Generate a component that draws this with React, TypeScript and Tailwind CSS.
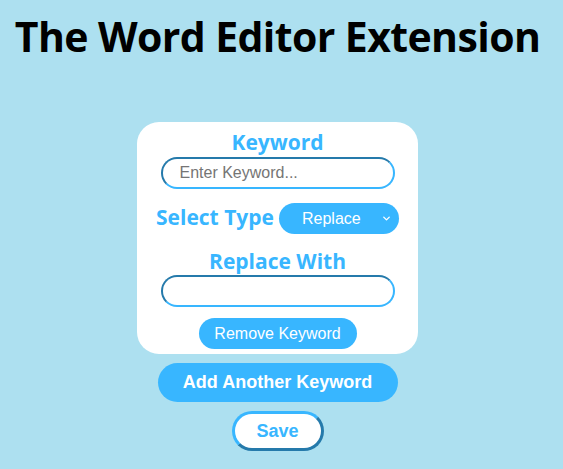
import { ChevronDown } from "lucide-react";

const App = () => {
  return (
    <div className="min-h-screen bg-[#ade0f0] flex flex-col items-center pt-[10px] pr-[8px] font-['Liberation_Sans',Arial,sans-serif]">
      {/* Title */}
      <h1 className="text-[41px] leading-[53px] font-bold text-black font-['Open_Sans','Noto_Sans',sans-serif] tracking-[-0.6px]">
        The Word Editor Extension
      </h1>

      {/* Keyword card */}
      <div className="mt-[59px] w-[281px] bg-white rounded-[22px] flex flex-col items-center pt-[6px] pb-[5px]">
        <label className="text-[21px] leading-[28px] font-bold text-[#38b6ff] font-['Open_Sans','Noto_Sans',sans-serif]">
          Keyword
        </label>
        <input
          type="text"
          placeholder="Enter Keyword..."
          className="mt-[1px] w-[234px] h-[32px] rounded-full border-2 [border-style:inset] border-[#38b6ff] px-[17px] text-[16px] text-black placeholder:text-[#757575] outline-none"
        />

        <div className="mt-[14px] flex items-center gap-[5px]">
          <span className="text-[21px] leading-[28px] font-bold text-[#38b6ff] font-['Open_Sans','Noto_Sans',sans-serif] pb-[3px]">
            Select Type
          </span>
          <div className="relative">
            <select className="appearance-none w-[120px] h-[31px] rounded-full bg-[#38b6ff] text-white text-[16px] pl-[23px] outline-none">
              <option>Replace</option>
            </select>
            <ChevronDown
              className="absolute right-[7px] top-[10px] w-[11px] h-[11px] text-white pointer-events-none"
              strokeWidth={3}
            />
          </div>
        </div>

        <label className="mt-[13px] text-[21px] leading-[28px] font-bold text-[#38b6ff] font-['Open_Sans','Noto_Sans',sans-serif]">
          Replace With
        </label>
        <input
          type="text"
          className="w-[234px] h-[32px] rounded-full border-2 [border-style:inset] border-[#38b6ff] px-[17px] text-[16px] text-black outline-none"
        />

        <button className="mt-[11px] w-[158px] h-[31px] rounded-full bg-[#38b6ff] text-white text-[16px]">
          Remove Keyword
        </button>
      </div>

      {/* Actions */}
      <button className="mt-[9px] w-[240px] h-[39px] rounded-full bg-[#38b6ff] text-white text-[18px] font-bold">
        Add Another Keyword
      </button>
      <button className="mt-[9px] w-[92px] h-[40px] rounded-full bg-white border-[3px] [border-style:outset] border-[#38b6ff] text-[#38b6ff] text-[18px] font-bold">
        Save
      </button>
    </div>
  );
};

export default App;
